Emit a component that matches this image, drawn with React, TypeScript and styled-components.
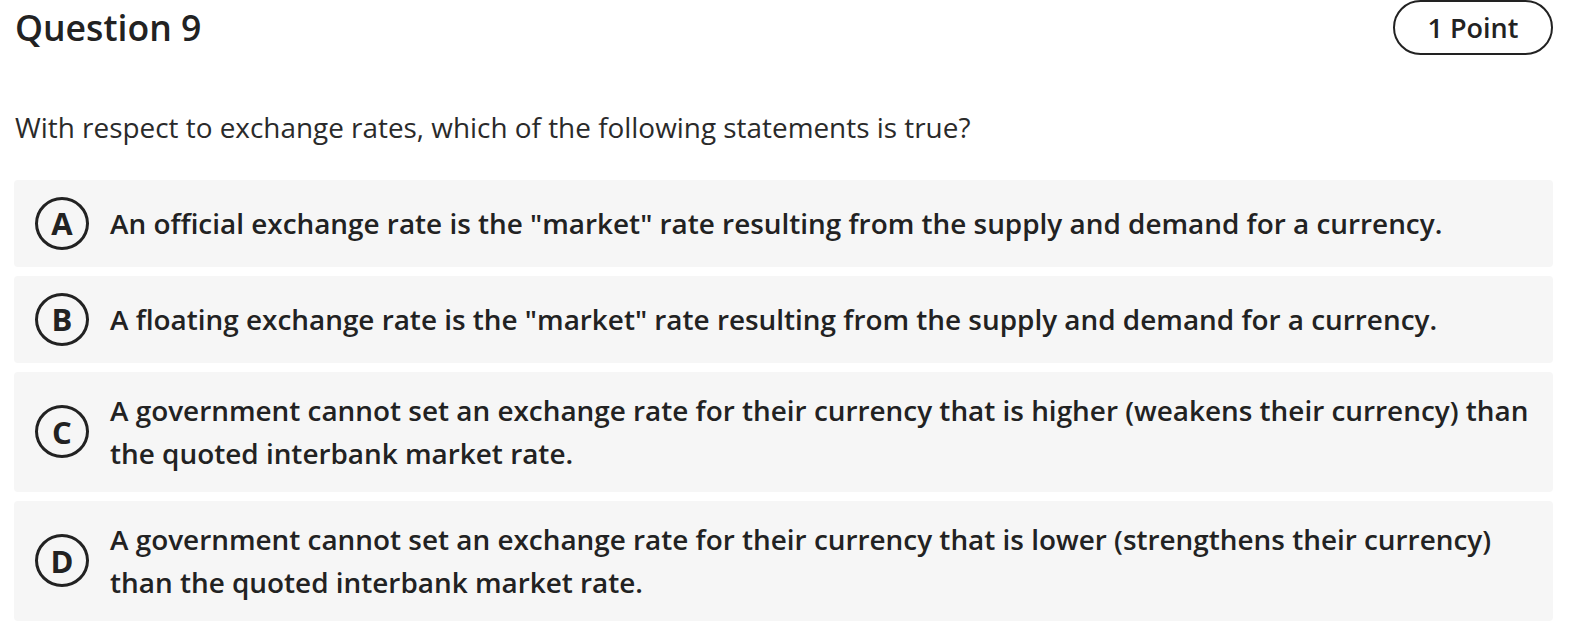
import React from "react";
import styled, { createGlobalStyle } from "styled-components";

const Global = createGlobalStyle`
  html, body { margin: 0; padding: 0; background: #ffffff; }
  body { font-family: "Open Sans", "Noto Sans", sans-serif; color: #222222; }
`;

const Page = styled.div`
  padding: 0 17px 0 14px;
`;

const Header = styled.div`
  display: flex;
  justify-content: space-between;
  align-items: center;
  height: 55px;
`;

const Title = styled.h2`
  margin: 0 0 0 1px;
  font-size: 35.6px;
  font-weight: 600;
  line-height: 1;
  color: #222222;
`;

const PointsPill = styled.div`
  box-sizing: border-box;
  height: 55px;
  width: 160px;
  border: 2px solid #222222;
  border-radius: 28px;
  display: flex;
  align-items: center;
  justify-content: center;
  font-size: 27px;
  font-weight: 600;
  color: #222222;
`;

const Prompt = styled.p`
  margin: 50px 0 30px 1px;
  font-size: 27.9px;
  line-height: 44.8px;
  font-weight: 400;
  color: #2a2a2a;
`;

const Options = styled.div`
  display: flex;
  flex-direction: column;
  gap: 9px;
`;

const Option = styled.div`
  display: flex;
  align-items: center;
  gap: 21px;
  padding: 17px 17px 17px 21px;
  background: #f6f6f6;
  border-radius: 4px;
`;

const Letter = styled.span`
  box-sizing: border-box;
  flex: none;
  width: 54px;
  height: 53px;
  border: 3px solid #222222;
  border-radius: 50%;
  display: flex;
  align-items: center;
  justify-content: center;
  font-size: 31px;
  font-weight: 700;
  color: #222222;
`;

const OptionText = styled.span`
  font-size: 27.9px;
  line-height: 43px;
  font-weight: 600;
  color: #222222;
`;

const options = [
  { key: "A", text: 'An official exchange rate is the "market" rate resulting from the supply and demand for a currency.' },
  { key: "B", text: 'A floating exchange rate is the "market" rate resulting from the supply and demand for a currency.' },
  { key: "C", text: "A government cannot set an exchange rate for their currency that is higher (weakens their currency) than the quoted interbank market rate." },
  { key: "D", text: "A government cannot set an exchange rate for their currency that is lower (strengthens their currency) than the quoted interbank market rate." },
];

export default function App() {
  return (
    <>
      <Global />
      <Page>
        <Header>
          <Title>Question 9</Title>
          <PointsPill>1 Point</PointsPill>
        </Header>
        <Prompt>With respect to exchange rates, which of the following statements is true?</Prompt>
        <Options>
          {options.map((o) => (
            <Option key={o.key}>
              <Letter>{o.key}</Letter>
              <OptionText>{o.text}</OptionText>
            </Option>
          ))}
        </Options>
      </Page>
    </>
  );
}
